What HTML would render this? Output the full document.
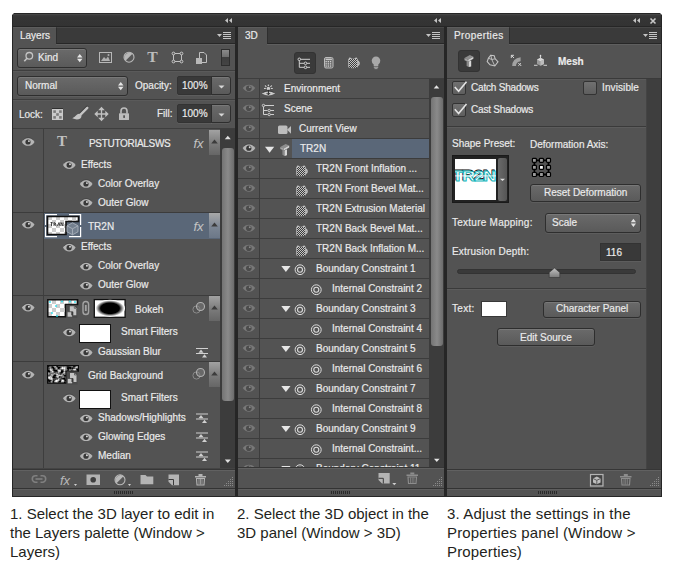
<!DOCTYPE html>
<html><head><meta charset="utf-8">
<style>
*{margin:0;padding:0;box-sizing:border-box}
html,body{width:675px;height:571px;overflow:hidden;background:#fff}
body{position:relative;font-family:"Liberation Sans",sans-serif;font-size:10px;color:#ececec}
.a{position:absolute}
.t{position:absolute;white-space:nowrap;line-height:12px;height:12px;-webkit-text-stroke:0.18px #e8e8e8}
.sep{position:absolute;background:#3c3c3c;height:1px}
.vsep{position:absolute;background:#3c3c3c;width:1px}
.btn{position:absolute;border:1px solid #2e2e2e;border-radius:3px;background:linear-gradient(#6a6a6a,#5a5a5a);box-shadow:inset 0 1px 0 rgba(255,255,255,.10),0 1px 0 rgba(255,255,255,.06)}
.inp{position:absolute;background:#393939;border:1px solid #333;box-shadow:0 1px 0 rgba(255,255,255,.06)}
.cap{position:absolute;font-size:15px;line-height:19px;color:#231f20;white-space:nowrap;letter-spacing:0px}
svg{position:absolute;overflow:visible}
.eye{position:absolute;width:13px;height:9px}
</style></head><body>

<!-- frame -->
<div class="a" style="left:12px;top:13px;width:650px;height:484px;background:#262626;clip-path:polygon(2px 0,calc(100% - 2px) 0,100% 2px,100% 100%,0 100%,0 2px)"></div>
<!-- header -->
<div class="a" style="left:13px;top:14px;width:648px;height:12px;background:linear-gradient(#3b3b3b,#353535 20%,#333);border-top:1px solid #454545"></div>
<!-- panel bodies -->
<div class="a" style="left:13px;top:27px;width:222px;height:469px;background:#535353"></div>
<div class="a" style="left:238px;top:27px;width:206px;height:469px;background:#535353"></div>
<div class="a" style="left:447px;top:27px;width:214px;height:469px;background:#535353"></div>
<!-- tab highlights -->
<div class="a" style="left:13px;top:27px;width:43px;height:1px;background:#5d5d5d"></div>
<div class="a" style="left:238px;top:27px;width:29px;height:1px;background:#5d5d5d"></div>
<div class="a" style="left:447px;top:27px;width:62px;height:1px;background:#5d5d5d"></div>
<!-- tab bars -->
<div class="a" style="left:56px;top:27px;width:179px;height:17px;background:#3a3a3a;border-top:1px solid #474747;border-left:1px solid #2e2e2e;border-bottom:1px solid #272727;box-shadow:0 1px 0 #5f5f5f"></div>
<div class="a" style="left:267px;top:27px;width:177px;height:17px;background:#3a3a3a;border-top:1px solid #474747;border-left:1px solid #2e2e2e;border-bottom:1px solid #272727;box-shadow:0 1px 0 #5f5f5f"></div>
<div class="a" style="left:509px;top:27px;width:152px;height:17px;background:#3a3a3a;border-top:1px solid #474747;border-left:1px solid #2e2e2e;border-bottom:1px solid #272727;box-shadow:0 1px 0 #5f5f5f"></div>

<div class="t" style="left:20px;top:30px">Layers</div>
<div class="t" style="left:245px;top:30px">3D</div>
<div class="t" style="left:454px;top:30px;letter-spacing:0.4px">Properties</div>

<!-- header collapse icons -->
<svg style="left:0;top:0" width="675" height="30">
 <g fill="#c4c4c4">
  <path d="M225 20.5 L228 18 L228 23 Z M229 20.5 L232 18 L232 23 Z"/>
  <path d="M434 20.5 L437 18 L437 23 Z M438 20.5 L441 18 L441 23 Z"/>
  <path d="M633 20.5 L636 18 L636 23 Z M637 20.5 L640 18 L640 23 Z"/>
 </g>
 <path d="M650.5 18.5 L655.5 23.5 M655.5 18.5 L650.5 23.5" stroke="#c8c8c8" stroke-width="1.6"/>
</svg>
<!-- panel menu icons -->
<svg style="left:0;top:0" width="675" height="45">
 <g fill="#c4c4c4">
  <path d="M217 34 L222 34 L219.5 37 Z"/><rect x="223" y="32" width="8" height="1"/><rect x="223" y="34" width="8" height="1"/><rect x="223" y="36" width="8" height="1"/><rect x="223" y="38" width="8" height="1"/>
  <path d="M426 34 L431 34 L428.5 37 Z"/><rect x="432" y="32" width="8" height="1"/><rect x="432" y="34" width="8" height="1"/><rect x="432" y="36" width="8" height="1"/><rect x="432" y="38" width="8" height="1"/>
  <path d="M643 34 L648 34 L645.5 37 Z"/><rect x="649" y="32" width="8" height="1"/><rect x="649" y="34" width="8" height="1"/><rect x="649" y="36" width="8" height="1"/><rect x="649" y="38" width="8" height="1"/>
 </g>
</svg>
<!-- ================= LAYERS PANEL ================= -->
<!-- row1: filter -->
<div class="btn" style="left:17px;top:48px;width:70px;height:20px"></div>
<div class="t" style="left:38px;top:52px">Kind</div>
<div class="sep" style="left:13px;top:70px;width:222px;background:#3e3e3e;box-shadow:0 1px 0 #5a5a5a"></div>
<div class="a" style="left:221px;top:49px;width:9px;height:17px;border:1px solid #2e2e2e;background:linear-gradient(#8a8a8a,#6c6c6c 50%,#3e3e3e 50%,#444)"></div>
<!-- row2: blend -->
<div class="btn" style="left:17px;top:76px;width:111px;height:20px"></div>
<div class="t" style="left:25px;top:80px">Normal</div>
<div class="t" style="left:135px;top:80px">Opacity:</div>
<div class="inp" style="left:177px;top:76px;width:35px;height:19px;border-radius:2px 0 0 2px"></div>
<div class="btn" style="left:211px;top:76px;width:20px;height:19px;border-radius:0 3px 3px 0"></div>
<div class="t" style="left:182px;top:80px">100%</div>
<div class="sep" style="left:13px;top:99px;width:222px;background:#3e3e3e;box-shadow:0 1px 0 #5a5a5a"></div>
<!-- row3: lock -->
<div class="t" style="left:19px;top:109px">Lock:</div>
<div class="t" style="left:157px;top:108px">Fill:</div>
<div class="inp" style="left:177px;top:104px;width:35px;height:19px;border-radius:2px 0 0 2px"></div>
<div class="btn" style="left:211px;top:104px;width:20px;height:19px;border-radius:0 3px 3px 0"></div>
<div class="t" style="left:182px;top:108px">100%</div>
<div class="sep" style="left:13px;top:128px;width:222px;background:#3e3e3e"></div>

<!-- list -->
<div class="vsep" style="left:43px;top:129px;height:339px;background:#3e3e3e"></div>
<div class="a" style="left:44px;top:213px;width:177px;height:26px;background:#5a6778"></div>
<div class="sep" style="left:13px;top:212px;width:208px"></div>
<div class="sep" style="left:13px;top:295px;width:208px"></div>
<div class="sep" style="left:13px;top:361px;width:208px"></div>

<div class="t" style="left:89px;top:138px;letter-spacing:-0.3px">PSTUTORIALSWS</div>
<div class="t" style="left:81px;top:159px">Effects</div>
<div class="t" style="left:98px;top:178px">Color Overlay</div>
<div class="t" style="left:98px;top:197px">Outer Glow</div>
<div class="t" style="left:88px;top:221px">TR2N</div>
<div class="t" style="left:81px;top:241px">Effects</div>
<div class="t" style="left:98px;top:260px">Color Overlay</div>
<div class="t" style="left:98px;top:279px">Outer Glow</div>
<div class="t" style="left:135px;top:304px">Bokeh</div>
<div class="t" style="left:121px;top:326px">Smart Filters</div>
<div class="t" style="left:98px;top:346px">Gaussian Blur</div>
<div class="t" style="left:88px;top:370px">Grid Background</div>
<div class="t" style="left:121px;top:392px">Smart Filters</div>
<div class="t" style="left:98px;top:412px">Shadows/Highlights</div>
<div class="t" style="left:98px;top:431px">Glowing Edges</div>
<div class="t" style="left:98px;top:450px">Median</div>

<!-- thumbnails -->
<div class="a" style="left:79px;top:324px;width:32px;height:19px;background:#fff;border:1px solid #111"></div>
<div class="a" style="left:79px;top:390px;width:32px;height:19px;background:#fff;border:1px solid #111"></div>

<!-- expand buttons -->
<div class="a" style="left:209px;top:130px;width:11px;height:25px;background:linear-gradient(#a2a2a2,#7a7a7a 55%,#666)"></div>
<div class="a" style="left:209px;top:213px;width:11px;height:25px;background:linear-gradient(#a8a8a8,#7c8694 55%,#6c7888)"></div>
<div class="a" style="left:209px;top:296px;width:11px;height:25px;background:linear-gradient(#a2a2a2,#7a7a7a 55%,#666)"></div>
<div class="a" style="left:209px;top:362px;width:11px;height:25px;background:linear-gradient(#a2a2a2,#7a7a7a 55%,#666)"></div>

<!-- scrollbar -->
<div class="a" style="left:220px;top:129px;width:15px;height:339px;background:#3c3c3c"></div>
<div class="a" style="left:222px;top:148px;width:12px;height:253px;border-radius:3px;background:linear-gradient(90deg,#747474,#8a8a8a 50%,#6c6c6c)"></div>

<!-- toolbar -->
<div class="a" style="left:13px;top:468px;width:222px;height:3px;background:linear-gradient(#444 0,#444 33%,#363636 33%,#363636 66%,#616161 66%)"></div>
<div class="a" style="left:13px;top:488px;width:222px;height:2px;background:linear-gradient(#333 50%,#5e5e5e 50%)"></div>
<!-- ================= 3D PANEL ================= -->
<div class="a" style="left:294px;top:52px;width:22px;height:22px;border-radius:3px;background:#3a3a3a;border:1px solid #333"></div>
<div class="sep" style="left:238px;top:78px;width:206px;background:#3e3e3e"></div>
<div class="a" style="left:238px;top:79px;width:206px;height:388px;overflow:hidden">
 <div class="a" style="left:54px;top:60px;width:138px;height:19px;background:#5a6778"></div>
 <div class="vsep" style="left:21px;top:-1px;height:390px"></div>
 <div class="sep" style="left:0;top:19px;width:191px"></div>
 <div class="t" style="left:46px;top:4px">Environment</div>
 <div class="sep" style="left:0;top:39px;width:191px"></div>
 <div class="t" style="left:46px;top:24px">Scene</div>
 <div class="sep" style="left:0;top:59px;width:191px"></div>
 <div class="t" style="left:61px;top:44px">Current View</div>
 <div class="sep" style="left:0;top:79px;width:191px"></div>
 <div class="t" style="left:62px;top:64px">TR2N</div>
 <div class="sep" style="left:0;top:99px;width:191px"></div>
 <div class="t" style="left:78px;top:84px">TR2N Front Inflation ...</div>
 <div class="sep" style="left:0;top:119px;width:191px"></div>
 <div class="t" style="left:78px;top:104px">TR2N Front Bevel Mat...</div>
 <div class="sep" style="left:0;top:139px;width:191px"></div>
 <div class="t" style="left:78px;top:124px">TR2N Extrusion Material</div>
 <div class="sep" style="left:0;top:159px;width:191px"></div>
 <div class="t" style="left:78px;top:144px">TR2N Back Bevel Mat...</div>
 <div class="sep" style="left:0;top:179px;width:191px"></div>
 <div class="t" style="left:78px;top:164px">TR2N Back Inflation M...</div>
 <div class="sep" style="left:0;top:199px;width:191px"></div>
 <div class="t" style="left:78px;top:184px">Boundary Constraint 1</div>
 <div class="sep" style="left:0;top:219px;width:191px"></div>
 <div class="t" style="left:94px;top:204px">Internal Constraint 2</div>
 <div class="sep" style="left:0;top:239px;width:191px"></div>
 <div class="t" style="left:78px;top:224px">Boundary Constraint 3</div>
 <div class="sep" style="left:0;top:259px;width:191px"></div>
 <div class="t" style="left:94px;top:244px">Internal Constraint 4</div>
 <div class="sep" style="left:0;top:279px;width:191px"></div>
 <div class="t" style="left:78px;top:264px">Boundary Constraint 5</div>
 <div class="sep" style="left:0;top:299px;width:191px"></div>
 <div class="t" style="left:94px;top:284px">Internal Constraint 6</div>
 <div class="sep" style="left:0;top:319px;width:191px"></div>
 <div class="t" style="left:78px;top:304px">Boundary Constraint 7</div>
 <div class="sep" style="left:0;top:339px;width:191px"></div>
 <div class="t" style="left:94px;top:324px">Internal Constraint 8</div>
 <div class="sep" style="left:0;top:359px;width:191px"></div>
 <div class="t" style="left:78px;top:344px">Boundary Constraint 9</div>
 <div class="sep" style="left:0;top:379px;width:191px"></div>
 <div class="t" style="left:94px;top:364px">Internal Constraint...</div>
 <div class="sep" style="left:0;top:399px;width:191px"></div>
 <div class="t" style="left:78px;top:384px">Boundary Constraint 11</div>
 <div class="a" style="left:191px;top:-1px;width:15px;height:390px;background:#3c3c3c"></div>
 <div class="a" style="left:193px;top:18px;width:12px;height:249px;border-radius:3px;background:linear-gradient(90deg,#747474,#8a8a8a 50%,#6c6c6c)"></div>
</div>
<div class="a" style="left:238px;top:467px;width:206px;height:2px;background:linear-gradient(#363636 50%,#616161 50%)"></div>
<div class="a" style="left:238px;top:488px;width:206px;height:2px;background:linear-gradient(#333 50%,#5e5e5e 50%)"></div>
<!-- ================= PROPERTIES PANEL ================= -->
<div class="a" style="left:458px;top:50px;width:22px;height:22px;border-radius:3px;background:#3a3a3a;border:1px solid #333"></div>
<div class="t" style="left:558px;top:56px;font-weight:bold">Mesh</div>
<div class="sep" style="left:447px;top:78px;width:214px;background:#3a3a3a;box-shadow:0 1px 0 #5a5a5a"></div>
<div class="a" style="left:646px;top:79px;width:15px;height:390px;background:#3e3e3e;border-left:1px solid #444"></div>

<div class="a" style="left:452px;top:81px;width:14px;height:14px;border-radius:2px;border:1px solid #333;background:linear-gradient(#707070,#5e5e5e)"></div>
<div class="t" style="left:471px;top:82px;letter-spacing:-0.2px">Catch Shadows</div>
<div class="a" style="left:583px;top:81px;width:14px;height:14px;border-radius:2px;border:1px solid #333;background:linear-gradient(#707070,#5e5e5e)"></div>
<div class="t" style="left:602px;top:82px;letter-spacing:0.1px">Invisible</div>
<div class="a" style="left:452px;top:103px;width:14px;height:14px;border-radius:2px;border:1px solid #333;background:linear-gradient(#707070,#5e5e5e)"></div>
<div class="t" style="left:471px;top:104px;letter-spacing:-0.2px">Cast Shadows</div>
<div class="sep" style="left:447px;top:126px;width:199px;background:#3a3a3a;box-shadow:0 1px 0 #5c5c5c"></div>

<div class="t" style="left:452px;top:138px">Shape Preset:</div>
<div class="t" style="left:530px;top:139px">Deformation Axis:</div>
<div class="a" style="left:452px;top:155px;width:57px;height:48px;background:#222;border:1px solid #1a1a1a"></div>
<div class="a" style="left:455px;top:159px;width:41px;height:41px;background:#fff"></div>
<div class="a" style="left:498px;top:158px;width:9px;height:43px;border-radius:2px;background:linear-gradient(90deg,#6a6a6a,#555)"></div>
<div class="btn" style="left:530px;top:184px;width:111px;height:18px"></div>
<div class="t" style="left:544px;top:187px">Reset Deformation</div>

<div class="t" style="left:452px;top:217px;letter-spacing:0.25px">Texture Mapping:</div>
<div class="btn" style="left:545px;top:213px;width:96px;height:20px"></div>
<div class="t" style="left:552px;top:217px">Scale</div>

<div class="t" style="left:452px;top:246px;letter-spacing:0.2px">Extrusion Depth:</div>
<div class="inp" style="left:600px;top:243px;width:41px;height:18px"></div>
<div class="t" style="left:606px;top:247px">116</div>
<div class="a" style="left:457px;top:269px;width:179px;height:5px;border-radius:3px;background:#3a3a3a;border:1px solid #333"></div>

<div class="sep" style="left:447px;top:288px;width:199px;background:#3a3a3a;box-shadow:0 1px 0 #5c5c5c"></div>
<div class="t" style="left:452px;top:303px;letter-spacing:0.3px">Text:</div>
<div class="a" style="left:481px;top:301px;width:26px;height:16px;background:#fff;border:1px solid #383838"></div>
<div class="btn" style="left:543px;top:301px;width:98px;height:17px"></div>
<div class="t" style="left:556px;top:303px">Character Panel</div>
<div class="btn" style="left:497px;top:328px;width:98px;height:18px"></div>
<div class="t" style="left:520px;top:332px">Edit Source</div>

<div class="a" style="left:447px;top:469px;width:214px;height:2px;background:linear-gradient(#363636 50%,#616161 50%)"></div>
<div class="a" style="left:447px;top:488px;width:214px;height:2px;background:linear-gradient(#333 50%,#5e5e5e 50%)"></div>

<!-- captions -->
<div class="cap" style="left:10px;top:504px">1. Select the 3D layer to edit in<br>the Layers palette (Window &gt;<br>Layers)</div>
<div class="cap" style="left:237px;top:504px">2. Select the 3D object in the<br>3D panel (Window &gt; 3D)</div>
<div class="cap" style="left:447px;top:504px;letter-spacing:0.15px">3. Adjust the settings in the<br>Properties panel (Window &gt;<br>Properties)</div>
<svg style="left:0;top:0" width="675" height="571" viewBox="0 0 675 571">
<defs>
<g id="eye"><path d="M0.2 4.6 C2.8 -0.6 10.2 -0.6 12.8 4.6 C10.2 9.8 2.8 9.8 0.2 4.6Z" fill="#b4b4b4"/><path d="M1.2 3 C4 -0.4 9 -0.4 11.8 3" fill="none" stroke="#2c2c2c" stroke-width="0.8" opacity=".45"/><circle cx="6.3" cy="4.7" r="2.6" fill="#383838"/><circle cx="7.2" cy="3.8" r="0.95" fill="#dcdcdc"/></g>
<g id="eyed"><path d="M0.3 4.6 C3 0 10 0 12.7 4.6 C10 9.4 3 9.4 0.3 4.6Z" fill="#787878"/><circle cx="6.3" cy="4.7" r="2.8" fill="#4c4c4c"/><circle cx="7.3" cy="3.7" r="0.9" fill="#8a8a8a"/></g>
<g id="ud"><path d="M0 3.5 L2.75 0 L5.5 3.5Z M0 4.8 L2.75 8.3 L5.5 4.8Z" fill="#e6e6e6"/></g>
<g id="filt" fill="#d0d0d0"><rect x="0" y="0.5" width="12" height="1"/><rect x="0" y="5.5" width="12" height="1"/><path d="M2.5 5.2 L5 2 L7.5 5.2Z"/><path d="M6 10 L8.5 6.8 L11 10Z"/><rect x="0" y="9.5" width="12" height="0.8" opacity=".0"/></g>
<g id="badge"><circle cx="4" cy="7.5" r="3.6" fill="none" stroke="#8a8a8a" stroke-width="1"/><circle cx="8" cy="4.5" r="4" fill="#7a7a7a" fill-opacity=".55" stroke="#b0b0b0" stroke-width="1.1"/></g>
<g id="expup"><path d="M2.2 13.5 L5.5 9.5 L8.8 13.5Z" fill="#3c3c3c"/></g>
<g id="mat"><path d="M1 2.5 Q6 0.5 11 2.5 L11 9 Q6 11 1 9Z" fill="#aaa"/><path d="M2 3.5 h8 M2 5.5 h8 M2 7.5 h8 M3 2.5 v7 M5 2 v8 M7 2 v8 M9 2.5 v7" stroke="#555" stroke-width=".7"/><path d="M11 4 Q13 6 11 8" fill="none" stroke="#aaa" stroke-width="1.2"/></g>
<g id="ring"><circle cx="5.5" cy="5.5" r="4.8" fill="none" stroke="#e0e0e0" stroke-width="1.1"/><circle cx="5.5" cy="5.5" r="2.4" fill="none" stroke="#e0e0e0" stroke-width="1.1"/></g>
<g id="tri"><path d="M0 0 L9 0 L4.5 5.5Z" fill="#e8e8e8"/></g>
</defs>
<circle cx="29.3" cy="55.8" r="3.3" fill="none" stroke="#c4c4c4" stroke-width="1.3"/><path d="M27 58.3 L24.3 61.2" stroke="#c4c4c4" stroke-width="1.6"/>
<use href="#ud" x="77" y="54"/>
<use href="#ud" x="118" y="82"/>
<rect x="99.5" y="52.5" width="12" height="10" fill="none" stroke="#b8b8b8" stroke-width="1"/><path d="M101 61 L104 57 L106 59 L108 56.5 L110 61Z" fill="#b0b0b0"/><circle cx="108.5" cy="55" r="1" fill="#b0b0b0"/>
<circle cx="129" cy="57.2" r="5" fill="#575757" stroke="#b8b8b8" stroke-width="1.1"/><path d="M125.5 60.7 A5 5 0 0 1 132.5 53.7Z" fill="#b8b8b8"/>
<text x="152.6" y="62.2" font-family="Liberation Serif" font-weight="bold" font-size="15" fill="#bdbdbd" text-anchor="middle" transform="translate(152.6 0) scale(1.05 1) translate(-152.6 0)">T</text>
<rect x="173.5" y="53.5" width="8" height="8" fill="none" stroke="#c0c0c0" stroke-width="1"/><g fill="#575757" stroke="#c8c8c8" stroke-width="1"><circle cx="173.5" cy="53.5" r="1.4"/><circle cx="181.5" cy="53.5" r="1.4"/><circle cx="173.5" cy="61.5" r="1.4"/><circle cx="181.5" cy="61.5" r="1.4"/></g>
<path d="M199.5 52.5 L204 52.5 L206.5 55 L206.5 62.5 L199.5 62.5Z" fill="none" stroke="#c0c0c0" stroke-width="1"/><rect x="196" y="58" width="6" height="6" fill="#b8b8b8"/>
<path d="M218.5 85.5 L224.5 85.5 L221.5 88.5Z" fill="#d8d8d8"/><path d="M218.5 113.5 L224.5 113.5 L221.5 116.5Z" fill="#d8d8d8"/>
<rect x="52" y="108" width="11" height="1" fill="#222" opacity=".7"/><rect x="52" y="109" width="11" height="11" fill="#cacaca"/><g fill="#7a7a7a"><rect x="53.3" y="110.3" width="2.6" height="2.6"/><rect x="59.1" y="110.3" width="2.6" height="2.6"/><rect x="56.2" y="113.2" width="2.6" height="2.6"/><rect x="53.3" y="116.1" width="2.6" height="2.6"/><rect x="59.1" y="116.1" width="2.6" height="2.6"/></g>
<path d="M87.5 107.5 L80.5 114.5" stroke="#222" stroke-width="2.6" stroke-linecap="round" opacity=".5" transform="translate(-.4 -.5)"/><path d="M87.3 107.8 L80.3 114.8" stroke="#c4c4c4" stroke-width="2.4" stroke-linecap="round"/><path d="M80.8 114 Q78.5 113.2 76.5 115 Q75 117 72.3 118.3 Q77 120.5 80.3 118.5 Q82.3 116.8 80.8 114Z" fill="#c4c4c4"/>
<path d="M101.5 109 V119 M96.5 114 H106.5" stroke="#c0c0c0" stroke-width="1.3"/><path d="M101.5 106.8 L98.2 110.2 H104.8Z M101.5 121.2 L98.2 117.8 H104.8Z M94.3 114 L97.7 110.7 V117.3Z M108.7 114 L105.3 110.7 V117.3Z" fill="#c0c0c0"/>
<path d="M121 113.5 V111 A3 3 0 0 1 127 111 V113.5" fill="none" stroke="#bdbdbd" stroke-width="1.6"/><rect x="119" y="113.3" width="10" height="6.8" rx=".6" fill="#bdbdbd"/><rect x="123.3" y="115.3" width="1.6" height="2.6" fill="#4a4a4a"/>
<use href="#eye" x="21.7" y="137.3"/>
<use href="#eye" x="21.7" y="220.0"/>
<use href="#eye" x="21.7" y="303.0"/>
<use href="#eye" x="21.7" y="370.0"/>
<use href="#eye" x="62.8" y="160.4"/>
<use href="#eye" x="79.7" y="179.3"/>
<use href="#eye" x="79.7" y="198.2"/>
<use href="#eye" x="62.8" y="243"/>
<use href="#eye" x="79.7" y="262"/>
<use href="#eye" x="79.7" y="281"/>
<use href="#eye" x="62.8" y="327.7"/>
<use href="#eye" x="79.7" y="347.8"/>
<use href="#eye" x="62.8" y="393.7"/>
<use href="#eye" x="79.7" y="413.8"/>
<use href="#eye" x="79.7" y="432.6"/>
<use href="#eye" x="79.7" y="451.5"/>
<text x="62" y="146" font-family="Liberation Serif" font-weight="bold" font-size="15" fill="#c0c0c0" text-anchor="middle">T</text>
<text x="193.5" y="148" font-family="Liberation Sans" font-style="italic" font-size="13" fill="#c4c4c4">fx</text>
<text x="193.5" y="231" font-family="Liberation Sans" font-style="italic" font-size="13" fill="#c4c4c4">fx</text>
<use href="#badge" x="192.5" y="302"/><use href="#badge" x="192.5" y="368"/>
<use href="#filt" x="196" y="347.5"/>
<use href="#filt" x="196" y="413"/>
<use href="#filt" x="196" y="432"/>
<use href="#filt" x="196" y="451"/>
<use href="#expup" x="209" y="130"/>
<use href="#expup" x="209" y="213"/>
<use href="#expup" x="209" y="296"/>
<use href="#expup" x="209" y="362"/>
<path d="M224.8 139.2 L227.8 135.8 L230.8 139.2Z" fill="#e0e0e0"/><path d="M224.8 459.6 L227.8 463 L230.8 459.6Z" fill="#e0e0e0"/>
<g fill="none" stroke="#808080" stroke-width="1.6"><path d="M37.5 475.8 H35.5 A3.2 3.2 0 0 0 35.5 482.2 H37.5"/><path d="M40.5 475.8 H42.5 A3.2 3.2 0 0 1 42.5 482.2 H40.5"/><path d="M35.5 479 H42.5"/></g>
<text x="60" y="485" font-family="Liberation Sans" font-style="italic" font-size="13" fill="#b8b8b8">fx</text><path d="M74 484 L77 484 L75.5 486Z" fill="#d0d0d0"/>
<rect x="86.5" y="474.5" width="13.5" height="10.5" fill="#b2b2b2"/><circle cx="93.2" cy="479.8" r="2.8" fill="#3e3e3e"/>
<circle cx="120" cy="479.8" r="5" fill="#575757" stroke="#b8b8b8" stroke-width="1.1"/><path d="M116.5 483.3 A5 5 0 0 1 123.5 476.3Z" fill="#b8b8b8"/><path d="M128 484 L131 484 L129.5 486Z" fill="#d0d0d0"/>
<path d="M140.5 475 H145.5 L147 476.5 H153.3 V484.3 H140.5Z" fill="#b4b4b4"/>
<path d="M168.5 474.5 H179 V485.2 H172 L168.5 481.7Z" fill="#b4b4b4"/><path d="M168.5 479.5 H173.5 V485" fill="none" stroke="#3a3a3a" stroke-width="1"/>
<g fill="#b4b4b4"><rect x="195" y="476" width="11" height="1.5"/><rect x="198.5" y="474" width="4" height="2"/></g><path d="M196.5 478.5 H204.5 L204 485 H197Z" fill="none" stroke="#b4b4b4" stroke-width="1.1"/><path d="M199 479 V484.5 M200.5 479 V484.5 M202 479 V484.5" stroke="#b4b4b4" stroke-width=".7"/>
<rect x="232" y="477" width="1" height="1" fill="#8a8a8a"/><rect x="230" y="479" width="1" height="1" fill="#8a8a8a"/><rect x="232" y="479" width="1" height="1" fill="#8a8a8a"/><rect x="228" y="481" width="1" height="1" fill="#8a8a8a"/><rect x="230" y="481" width="1" height="1" fill="#8a8a8a"/><rect x="232" y="481" width="1" height="1" fill="#8a8a8a"/><rect x="226" y="483" width="1" height="1" fill="#8a8a8a"/><rect x="228" y="483" width="1" height="1" fill="#8a8a8a"/><rect x="230" y="483" width="1" height="1" fill="#8a8a8a"/><rect x="232" y="483" width="1" height="1" fill="#8a8a8a"/><rect x="224" y="485" width="1" height="1" fill="#8a8a8a"/><rect x="226" y="485" width="1" height="1" fill="#8a8a8a"/><rect x="228" y="485" width="1" height="1" fill="#8a8a8a"/><rect x="230" y="485" width="1" height="1" fill="#8a8a8a"/><rect x="232" y="485" width="1" height="1" fill="#8a8a8a"/>
<rect x="441" y="477" width="1" height="1" fill="#8a8a8a"/><rect x="439" y="479" width="1" height="1" fill="#8a8a8a"/><rect x="441" y="479" width="1" height="1" fill="#8a8a8a"/><rect x="437" y="481" width="1" height="1" fill="#8a8a8a"/><rect x="439" y="481" width="1" height="1" fill="#8a8a8a"/><rect x="441" y="481" width="1" height="1" fill="#8a8a8a"/><rect x="435" y="483" width="1" height="1" fill="#8a8a8a"/><rect x="437" y="483" width="1" height="1" fill="#8a8a8a"/><rect x="439" y="483" width="1" height="1" fill="#8a8a8a"/><rect x="441" y="483" width="1" height="1" fill="#8a8a8a"/><rect x="433" y="485" width="1" height="1" fill="#8a8a8a"/><rect x="435" y="485" width="1" height="1" fill="#8a8a8a"/><rect x="437" y="485" width="1" height="1" fill="#8a8a8a"/><rect x="439" y="485" width="1" height="1" fill="#8a8a8a"/><rect x="441" y="485" width="1" height="1" fill="#8a8a8a"/>
<rect x="658" y="477" width="1" height="1" fill="#8a8a8a"/><rect x="656" y="479" width="1" height="1" fill="#8a8a8a"/><rect x="658" y="479" width="1" height="1" fill="#8a8a8a"/><rect x="654" y="481" width="1" height="1" fill="#8a8a8a"/><rect x="656" y="481" width="1" height="1" fill="#8a8a8a"/><rect x="658" y="481" width="1" height="1" fill="#8a8a8a"/><rect x="652" y="483" width="1" height="1" fill="#8a8a8a"/><rect x="654" y="483" width="1" height="1" fill="#8a8a8a"/><rect x="656" y="483" width="1" height="1" fill="#8a8a8a"/><rect x="658" y="483" width="1" height="1" fill="#8a8a8a"/><rect x="650" y="485" width="1" height="1" fill="#8a8a8a"/><rect x="652" y="485" width="1" height="1" fill="#8a8a8a"/><rect x="654" y="485" width="1" height="1" fill="#8a8a8a"/><rect x="656" y="485" width="1" height="1" fill="#8a8a8a"/><rect x="658" y="485" width="1" height="1" fill="#8a8a8a"/>
<rect x="114" y="491" width="1" height="3" fill="#2a2a2a"/><rect x="116" y="491" width="1" height="3" fill="#2a2a2a"/><rect x="118" y="491" width="1" height="3" fill="#2a2a2a"/><rect x="120" y="491" width="1" height="3" fill="#2a2a2a"/><rect x="122" y="491" width="1" height="3" fill="#2a2a2a"/><rect x="124" y="491" width="1" height="3" fill="#2a2a2a"/><rect x="126" y="491" width="1" height="3" fill="#2a2a2a"/><rect x="128" y="491" width="1" height="3" fill="#2a2a2a"/><rect x="130" y="491" width="1" height="3" fill="#2a2a2a"/><rect x="132" y="491" width="1" height="3" fill="#2a2a2a"/>
<rect x="331" y="491" width="1" height="3" fill="#2a2a2a"/><rect x="333" y="491" width="1" height="3" fill="#2a2a2a"/><rect x="335" y="491" width="1" height="3" fill="#2a2a2a"/><rect x="337" y="491" width="1" height="3" fill="#2a2a2a"/><rect x="339" y="491" width="1" height="3" fill="#2a2a2a"/><rect x="341" y="491" width="1" height="3" fill="#2a2a2a"/><rect x="343" y="491" width="1" height="3" fill="#2a2a2a"/><rect x="345" y="491" width="1" height="3" fill="#2a2a2a"/><rect x="347" y="491" width="1" height="3" fill="#2a2a2a"/><rect x="349" y="491" width="1" height="3" fill="#2a2a2a"/>
<rect x="538" y="491" width="1" height="3" fill="#2a2a2a"/><rect x="540" y="491" width="1" height="3" fill="#2a2a2a"/><rect x="542" y="491" width="1" height="3" fill="#2a2a2a"/><rect x="544" y="491" width="1" height="3" fill="#2a2a2a"/><rect x="546" y="491" width="1" height="3" fill="#2a2a2a"/><rect x="548" y="491" width="1" height="3" fill="#2a2a2a"/><rect x="550" y="491" width="1" height="3" fill="#2a2a2a"/><rect x="552" y="491" width="1" height="3" fill="#2a2a2a"/><rect x="554" y="491" width="1" height="3" fill="#2a2a2a"/><rect x="556" y="491" width="1" height="3" fill="#2a2a2a"/>
</svg>
<svg style="left:0;top:0" width="675" height="571" viewBox="0 0 675 571">
<defs><clipPath id="c3d"><rect x="238" y="78" width="206" height="389"/></clipPath>
<pattern id="chk" width="8" height="8" patternUnits="userSpaceOnUse"><rect width="8" height="8" fill="#fff"/><rect width="4" height="4" fill="#cfcfcf"/><rect x="4" y="4" width="4" height="4" fill="#cfcfcf"/></pattern>
<pattern id="chk2" width="2" height="2" patternUnits="userSpaceOnUse"><rect width="2" height="2" fill="#c8c8c8"/><rect width="1" height="1" fill="#3a3a3a"/><rect x="1" y="1" width="1" height="1" fill="#3a3a3a"/></pattern>
<g id="mat2"><path d="M0.3 2.2 L1.8 0.2 L3.5 1.5 Q5 2 6.5 1.5 L8.2 0.2 L9.8 2.2 V10.2 Q5 12.3 0.3 10.2Z" fill="#c4c4c4"/><g fill="#3c3c3c"><rect x="2" y="2" width="1" height="1"/><rect x="4" y="2" width="1" height="1"/><rect x="6" y="2" width="1" height="1"/><rect x="8" y="2" width="1" height="1"/><rect x="1" y="3" width="1" height="1"/><rect x="3" y="3" width="1" height="1"/><rect x="5" y="3" width="1" height="1"/><rect x="7" y="3" width="1" height="1"/><rect x="2" y="4" width="1" height="1"/><rect x="4" y="4" width="1" height="1"/><rect x="6" y="4" width="1" height="1"/><rect x="8" y="4" width="1" height="1"/><rect x="1" y="5" width="1" height="1"/><rect x="3" y="5" width="1" height="1"/><rect x="5" y="5" width="1" height="1"/><rect x="7" y="5" width="1" height="1"/><rect x="2" y="6" width="1" height="1"/><rect x="4" y="6" width="1" height="1"/><rect x="6" y="6" width="1" height="1"/><rect x="8" y="6" width="1" height="1"/><rect x="1" y="7" width="1" height="1"/><rect x="3" y="7" width="1" height="1"/><rect x="5" y="7" width="1" height="1"/><rect x="7" y="7" width="1" height="1"/><rect x="2" y="8" width="1" height="1"/><rect x="4" y="8" width="1" height="1"/><rect x="6" y="8" width="1" height="1"/><rect x="8" y="8" width="1" height="1"/><rect x="1" y="9" width="1" height="1"/><rect x="3" y="9" width="1" height="1"/><rect x="5" y="9" width="1" height="1"/><rect x="7" y="9" width="1" height="1"/><rect x="2" y="10" width="1" height="1"/><rect x="4" y="10" width="1" height="1"/><rect x="6" y="10" width="1" height="1"/><rect x="8" y="10" width="1" height="1"/></g><path d="M10 4 Q12.3 6.3 10 8.6" fill="none" stroke="#c0c0c0" stroke-width="1.4"/></g>
<g id="ring2"><circle cx="5.5" cy="5.5" r="4.9" fill="none" stroke="#dcdcdc" stroke-width="1"/><circle cx="5.5" cy="5.5" r="2.5" fill="none" stroke="#dcdcdc" stroke-width="1.1"/></g>
<g id="tri2"><path d="M0 0.5 L9.2 0.5 L4.6 6.5Z" fill="#e6e6e6"/></g>
<g id="meshT"><path d="M0.3 3.6 L5.6 0.6 L9.2 2.2 L3.9 5.2Z" fill="#8e8e8e"/><path d="M3.9 5.2 L9.2 2.2 V4.3 L3.9 7.3Z" fill="#d2d2d2"/><path d="M0.3 3.6 L3.9 5.2 V7.3 L0.3 5.7Z" fill="#a4a4a4"/><path d="M2.4 6.2 L4.6 7.1 V12.6 L2.4 11.4Z" fill="#8a8a8a"/><path d="M4.6 7.1 L7 6 V12 L4.6 12.6Z" fill="#d6d6d6"/></g>
</defs>
<g fill="none" stroke="#d0d0d0" stroke-width="1"><circle cx="299.3" cy="59.3" r="1.3"/><path d="M300.6 59.3 H310 M299.3 60.6 V67.3 H304 M299.3 63.3 H304"/><circle cx="305.5" cy="63.3" r="1.3"/><circle cx="305.5" cy="67.3" r="1.3"/><path d="M306.8 63.3 H310 M306.8 67.3 H310"/></g>
<rect x="324.5" y="57.5" width="8.5" height="10.5" rx="1.5" fill="#6a6a6a" stroke="#bdbdbd" stroke-width="1"/><rect x="325.6" y="58.6" width="6.3" height="1.5" fill="#c8c8c8"/><g fill="#d0d0d0"><rect x="325.5" y="61.0" width="1.3" height="1.3"/><rect x="327.7" y="61.0" width="1.3" height="1.3"/><rect x="329.9" y="61.0" width="1.3" height="1.3"/><rect x="325.5" y="63.2" width="1.3" height="1.3"/><rect x="327.7" y="63.2" width="1.3" height="1.3"/><rect x="329.9" y="63.2" width="1.3" height="1.3"/><rect x="325.5" y="65.4" width="1.3" height="1.3"/><rect x="327.7" y="65.4" width="1.3" height="1.3"/><rect x="329.9" y="65.4" width="1.3" height="1.3"/></g>
<use href="#mat2" x="348" y="57"/>
<path d="M376 56.5 A4.3 4.3 0 0 1 380.3 60.8 Q380.3 63 378.3 64.6 V66 H373.7 V64.6 Q371.7 63 371.7 60.8 A4.3 4.3 0 0 1 376 56.5Z" fill="#a8a8a8"/><rect x="373.8" y="66.6" width="4.4" height="1.2" fill="#a8a8a8"/><rect x="374.5" y="68.2" width="3" height="0.9" fill="#a8a8a8"/>
<g clip-path="url(#c3d)">
<use href="#eyed" x="242.5" y="83.5"/>
<use href="#eyed" x="242.5" y="103.5"/>
<use href="#eyed" x="242.5" y="123.5"/>
<use href="#eye" x="242.5" y="143.5"/>
<use href="#eyed" x="242.5" y="163.5"/>
<use href="#eyed" x="242.5" y="183.5"/>
<use href="#eyed" x="242.5" y="203.5"/>
<use href="#eyed" x="242.5" y="223.5"/>
<use href="#eyed" x="242.5" y="243.5"/>
<use href="#eyed" x="242.5" y="263.5"/>
<use href="#eyed" x="242.5" y="283.5"/>
<use href="#eyed" x="242.5" y="303.5"/>
<use href="#eyed" x="242.5" y="323.5"/>
<use href="#eyed" x="242.5" y="343.5"/>
<use href="#eyed" x="242.5" y="363.5"/>
<use href="#eyed" x="242.5" y="383.5"/>
<use href="#eyed" x="242.5" y="403.5"/>
<use href="#eyed" x="242.5" y="423.5"/>
<use href="#eyed" x="242.5" y="443.5"/>
<use href="#eyed" x="242.5" y="463.5"/>
<g stroke="#1e1e1e" stroke-width="1.3" opacity=".6"><path d="M268.4 83.8 V85 M265.2 84.9 L266.2 86 M271.6 84.9 L270.6 86 M264 87.6 H265.8 M271 87.6 H272.8"/></g>
<g stroke="#cdcdcd" stroke-width="1.3"><path d="M268.4 84.6 V86 M265.1 85.4 L266.3 86.8 M271.7 85.4 L270.5 86.8 M264 88.4 H265.9 M270.9 88.4 H272.8"/></g><circle cx="268.4" cy="88.5" r="1.7" fill="#cdcdcd"/>
<path d="M261.8 93.6 Q268.4 89.6 275.2 93.6 Q268.4 97.4 261.8 93.6Z" fill="#c8c8c8"/><path d="M263 92.4 Q268.4 89 273.8 92.4" fill="none" stroke="#1e1e1e" stroke-width=".8" opacity=".5"/><path d="M268.4 89.8 V94.5 M266.6 93 L268.4 94.8 L270.2 93" fill="none" stroke="#2a2a2a" stroke-width="1"/>
<g fill="none" stroke="#cfcfcf" stroke-width="1"><circle cx="263.5" cy="105.5" r="1.2"/><path d="M264.7 105.5 H274 M263.5 106.7 V114.5 H267.5 M263.5 110.5 H267.5"/><circle cx="269.2" cy="110.5" r="1.2"/><circle cx="269.2" cy="114.5" r="1.2"/><path d="M270.4 110.5 H274 M270.4 114.5 H274"/></g>
<rect x="278" y="125.5" width="9.5" height="8.5" rx="1.5" fill="#bdbdbd"/><path d="M287 129.8 L291 126 V133.8Z" fill="#bdbdbd"/>
<use href="#tri2" x="265" y="146.3"/>
<use href="#meshT" x="280" y="143.3"/>
<use href="#mat2" x="296" y="165"/>
<use href="#mat2" x="296" y="185"/>
<use href="#mat2" x="296" y="205"/>
<use href="#mat2" x="296" y="225"/>
<use href="#mat2" x="296" y="245"/>
<use href="#tri2" x="281.3" y="265.6"/><use href="#ring2" x="294.5" y="264.2"/>
<use href="#ring2" x="310.8" y="284.2"/>
<use href="#tri2" x="281.3" y="305.6"/><use href="#ring2" x="294.5" y="304.2"/>
<use href="#ring2" x="310.8" y="324.2"/>
<use href="#tri2" x="281.3" y="345.6"/><use href="#ring2" x="294.5" y="344.2"/>
<use href="#ring2" x="310.8" y="364.2"/>
<use href="#tri2" x="281.3" y="385.6"/><use href="#ring2" x="294.5" y="384.2"/>
<use href="#ring2" x="310.8" y="404.2"/>
<use href="#tri2" x="281.3" y="425.6"/><use href="#ring2" x="294.5" y="424.2"/>
<use href="#ring2" x="310.8" y="444.2"/>
<use href="#tri2" x="281.3" y="465.6"/><use href="#ring2" x="294.5" y="464.2"/>
</g>
<path d="M433.7 88.5 L436.5 85.3 L439.3 88.5Z" fill="#e6e6e6"/><path d="M434 458.8 L436.8 462 L439.6 458.8Z" fill="#e6e6e6"/>
<path d="M378.5 473 H389.7 V483.5 H382 L378.5 480Z" fill="#b4b4b4"/><path d="M378.5 478.3 H383.3 V483.5" fill="none" stroke="#3a3a3a" stroke-width="1"/><path d="M392.3 483 L396.3 483 L394.3 485.3Z" fill="#d0d0d0"/>
<g opacity=".6"><g fill="#b4b4b4"><rect x="406.5" y="474.5" width="11.5" height="1.5"/><rect x="410.3" y="472.5" width="4" height="2"/></g><path d="M408 477 H416.5 L416 483.5 H408.5Z" fill="none" stroke="#b4b4b4" stroke-width="1.1"/><path d="M410.5 477.5 V483 M412.2 477.5 V483 M413.9 477.5 V483" stroke="#b4b4b4" stroke-width=".7"/></g>
<use href="#meshT" x="464.2" y="54.5"/>
<path d="M490.8 55.2 L494.2 55.8 L495.2 58.8 L498 61.8 L494.8 66 L490 64.8 L487.2 61.6 L488.4 58.2Z" fill="none" stroke="#c4c4c4" stroke-width="1.1"/><path d="M490.8 55.2 L491.8 59.5 L494.8 66 M488.4 58.2 L491.8 59.5 L495.2 58.8" fill="none" stroke="#c4c4c4" stroke-width=".9"/>
<path d="M512.2 66 Q512.2 58.6 520.6 57.3 V61.2 Q516 62 516 66Z" fill="#a2a2a2"/>
<path d="M511 55 L514 58 M511.3 58 V55.3 H514" fill="none" stroke="#d4d4d4" stroke-width="1"/><path d="M521.3 66 L518.3 63 M518.3 65.8 L521 63.2" fill="none" stroke="#d4d4d4" stroke-width="1"/>
<path d="M537 59.5 L540.5 57.8 L544 59.5 V64 L540.5 65.8 L537 64Z" fill="#9a9a9a"/><path d="M537 59.5 L540.5 61.2 L544 59.5 L540.5 57.8Z" fill="#d8d8d8"/><path d="M540.5 61.2 V65.8 L544 64 V59.5Z" fill="#bcbcbc"/>
<path d="M540.5 55 V59.5 M534 65.3 H537.5 M543.5 65.3 H547" stroke="#d0d0d0" stroke-width="1"/><path d="M539.3 56.3 L540.5 54.5 L541.7 56.3Z" fill="#e0e0e0"/>
<path d="M454.8 87.0 L458.6 91.3 L466.5 81.8" fill="none" stroke="#e4e4e4" stroke-width="1.6"/>
<path d="M454.8 109.3 L458.6 113.6 L466.5 104.1" fill="none" stroke="#e4e4e4" stroke-width="1.6"/>
<path d="M534.4 160.4 H548.5 V174.5 H534.4Z" fill="none" stroke="#000" stroke-width="1.8"/>
<rect x="532.4" y="158.4" width="4" height="4" rx=".8" fill="#9a9a9a" stroke="#000" stroke-width="1.2"/>
<rect x="532.4" y="165.45" width="4" height="4" rx=".8" fill="#9a9a9a" stroke="#000" stroke-width="1.2"/>
<rect x="532.4" y="172.5" width="4" height="4" rx=".8" fill="#9a9a9a" stroke="#000" stroke-width="1.2"/>
<rect x="539.45" y="158.4" width="4" height="4" rx=".8" fill="#9a9a9a" stroke="#000" stroke-width="1.2"/>
<rect x="539.45" y="165.45" width="4" height="4" rx=".8" fill="#fafafa" stroke="#000" stroke-width="1.2"/>
<rect x="539.45" y="172.5" width="4" height="4" rx=".8" fill="#9a9a9a" stroke="#000" stroke-width="1.2"/>
<rect x="546.5" y="158.4" width="4" height="4" rx=".8" fill="#9a9a9a" stroke="#000" stroke-width="1.2"/>
<rect x="546.5" y="165.45" width="4" height="4" rx=".8" fill="#9a9a9a" stroke="#000" stroke-width="1.2"/>
<rect x="546.5" y="172.5" width="4" height="4" rx=".8" fill="#9a9a9a" stroke="#000" stroke-width="1.2"/>
<clipPath id="cpre"><rect x="455" y="159" width="41" height="41"/></clipPath>
<g clip-path="url(#cpre)" font-family="Liberation Sans" font-weight="bold" font-size="16" letter-spacing="-0.8"><g transform="translate(455 181) scale(1.12 0.95)"><text x="-3.2" y="-0.6" fill="none" stroke="#000" stroke-width=".8">TR2N</text><text x="-2.5" y="0.2" fill="#fff" stroke="#10b6bc" stroke-width=".9">TR2N</text><rect x="-3" y="-6" width="45" height="1.2" fill="#fff" opacity=".8"/></g></g>
<path d="M500 178.7 L505 178.7 L502.5 181Z" fill="#e0e0e0"/>
<path d="M630.8 222.3 L633.4 218.8 L636 222.3Z M630.8 223.5 L633.4 227 L636 223.5Z" fill="#e0e0e0"/>
<linearGradient id="thg" x1="0" y1="0" x2="0" y2="1"><stop offset="0" stop-color="#c4c4c4"/><stop offset="1" stop-color="#7a7a7a"/></linearGradient><path d="M554.5 268 L559.8 272.5 V277.5 H549.2 V272.5Z" fill="url(#thg)" stroke="#333" stroke-width=".6"/>
<rect x="590.5" y="474.5" width="12.5" height="11.5" fill="none" stroke="#b4b4b4" stroke-width="1.2"/><rect x="591.5" y="475.5" width="10.5" height="9.5" fill="#444"/><path d="M596.8 476.5 L600.6 478.4 V482.4 L596.8 484.3 L593 482.4 V478.4Z" fill="#bdbdbd"/><path d="M596.8 480.3 V484 M593.2 478.6 L596.8 480.3 L600.4 478.6" stroke="#444" stroke-width=".8" fill="none"/>
<g opacity=".6"><g fill="#b4b4b4"><rect x="620" y="476" width="11.5" height="1.5"/><rect x="623.8" y="474" width="4" height="2"/></g><path d="M621.5 478.5 H630 L629.5 485 H622Z" fill="none" stroke="#b4b4b4" stroke-width="1.1"/><path d="M624 479 V484.5 M625.7 479 V484.5 M627.4 479 V484.5" stroke="#b4b4b4" stroke-width=".7"/></g>
</svg>
<svg style="left:0;top:0" width="675" height="571" viewBox="0 0 675 571">
<defs><pattern id="ck4" width="8" height="8" patternUnits="userSpaceOnUse"><rect width="8" height="8" fill="#fff"/><rect width="4" height="4" fill="#cdcdcd"/><rect x="4" y="4" width="4" height="4" fill="#cdcdcd"/></pattern>
<radialGradient id="blob" cx=".5" cy=".5" r=".5"><stop offset=".62" stop-color="#000"/><stop offset=".95" stop-color="#fff"/></radialGradient>
<g id="sobadge"><rect x="0" y="0" width="11" height="13" fill="#4a4a4a"/><path d="M3.5 1.5 H8 L10 3.5 V10.5 H3.5Z" fill="#c4c4c4"/><path d="M8 1.5 V3.5 H10" fill="none" stroke="#555" stroke-width=".8"/><rect x="0.8" y="7" width="5.3" height="5.3" fill="#c4c4c4" stroke="#4a4a4a" stroke-width=".8"/><rect x="5" y="7" width="2" height="3.5" fill="#3a3a3a"/></g>
</defs>
<g fill="none" stroke="#fff" stroke-width="1.2"><path d="M45.6 225 V214.6 H57 M69 214.6 H80.6 V225 M80.6 227 V236.6 H69 M57 236.6 H45.6 V227"/></g>
<path d="M47.5 216.5 H78.5 V221.5 H66 V234.5 H47.5Z" fill="url(#ck4)" stroke="#111" stroke-width="1.6"/>
<path d="M50.5 222.5 H52.5 M51.5 222.5 V226 M54 226 V222.5 L56 224 L54.5 224.5 L56.5 226 M57.5 226 L59 222.5 L60 226 M61 226 V222.5 L63 226 V222.5" fill="none" stroke="#222" stroke-width=".8"/>
<g fill="#8a95a2" fill-opacity=".55" stroke="#a8b0ba" stroke-width=".9"><path d="M72.5 222.8 L78 225.8 V231.8 L72.5 234.8 L67 231.8 V225.8Z"/></g><path d="M67 225.8 L72.5 228.8 L78 225.8 M72.5 228.8 V234.8" fill="none" stroke="#a8b0ba" stroke-width=".9"/>
<path d="M47.8 299.8 H77.6 V304.5 H65.5 V316.7 H47.8Z" fill="url(#ck4)" stroke="#111" stroke-width="1.5"/>
<circle cx="50" cy="302" r="1.1" fill="#20e0f0" fill-opacity=".8"/>
<circle cx="56" cy="306" r="1.1" fill="#20e0f0" fill-opacity=".8"/>
<circle cx="62" cy="301.5" r="1.1" fill="#20e0f0" fill-opacity=".8"/>
<circle cx="52" cy="313" r="1.1" fill="#20e0f0" fill-opacity=".8"/>
<circle cx="57" cy="316" r="1.1" fill="#20e0f0" fill-opacity=".8"/>
<circle cx="70" cy="301.5" r="1.1" fill="#20e0f0" fill-opacity=".8"/>
<circle cx="75" cy="302" r="1.1" fill="#20e0f0" fill-opacity=".8"/>
<use href="#sobadge" x="66.3" y="304.8"/>
<rect x="83" y="301.5" width="5.6" height="13" rx="2.8" fill="none" stroke="#a4a4a4" stroke-width="1.4"/><rect x="84.9" y="305" width="1.8" height="6" fill="#a4a4a4"/>
<rect x="94.3" y="299.6" width="30.8" height="17.7" fill="#fff" stroke="#111" stroke-width="1.3"/>
<ellipse cx="110" cy="308.3" rx="15" ry="8.5" fill="url(#blob)"/>
<filter id="noi" x="0" y="0" width="1" height="1"><feTurbulence type="fractalNoise" baseFrequency="0.28" numOctaves="2" seed="7"/><feColorMatrix type="matrix" values="0 0 0 0 0  0 0 0 0 0  0 0 0 0 0  0 0 0 0 0"/><feComponentTransfer><feFuncA type="linear" slope="0" intercept="1"/></feComponentTransfer></filter>
<filter id="noi2" x="0" y="0" width="1" height="1" color-interpolation-filters="sRGB"><feTurbulence type="fractalNoise" baseFrequency="0.3" numOctaves="2" seed="11" result="n"/><feColorMatrix in="n" type="matrix" values="2.2 0 0 0 -0.65  2.2 0 0 0 -0.65  2.2 0 0 0 -0.65  0 0 0 0 1"/></filter>
<clipPath id="cgrid"><path d="M48 366 H78 V371 H66 V383 H48Z"/></clipPath>
<g clip-path="url(#cgrid)"><rect x="48" y="366" width="30" height="17" filter="url(#noi2)"/></g>
<path d="M47.6 365.6 H78.4 V371.2 H66.2 V383.2 H47.6Z" fill="none" stroke="#0c0c0c" stroke-width="1.2"/>
<use href="#sobadge" x="66.5" y="371.5"/>
</svg>
</body></html>
